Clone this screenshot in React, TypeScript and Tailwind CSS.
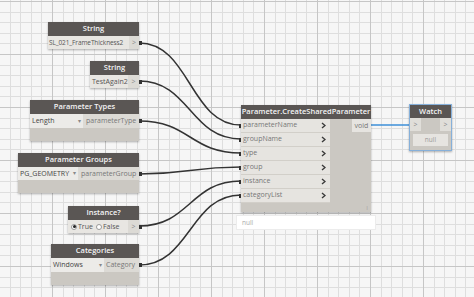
import type { ReactNode } from 'react'

// Dynamo-style graph: grid canvas, wires, nodes
function Node({ title, className, children }: { title: string; className: string; children: ReactNode }) {
  return (
    <div className={`absolute flex flex-col bg-[#cbc8c2] shadow-[0_1px_2px_rgba(0,0,0,0.3)] ${className}`}>
      <div className="flex h-[14px] shrink-0 items-center justify-center whitespace-nowrap bg-[#5a5654] text-[7.5px] font-semibold leading-none text-[#f4f4f4]">
        {title}
      </div>
      {children}
    </div>
  )
}

function OutPort({ className }: { className: string }) {
  return <div className={`absolute right-[-3px] h-[4px] w-[3px] bg-[#333] ${className}`} />
}

function Chevron() {
  return (
    <svg width="5" height="7" viewBox="0 0 5 7">
      <path d="M1 1 L4 3.5 L1 6" fill="none" stroke="#3a3a3a" strokeWidth="1.4" />
    </svg>
  )
}

const inputs = ['parameterName', 'groupName', 'type', 'group', 'instance', 'categoryList']

export default function App() {
  return (
    <div className="relative h-[297px] w-[474px] overflow-hidden bg-[#f6f6f6] font-['Open_Sans',sans-serif]">
      {/* grid */}
      <svg className="absolute inset-0" width="474" height="297">
        <defs>
          <pattern id="g" x="-1" y="1" width="53" height="53" patternUnits="userSpaceOnUse">
            <rect x="11" y="0" width="1" height="53" fill="#dedede" />
            <rect x="21" y="0" width="1" height="53" fill="#dedede" />
            <rect x="32" y="0" width="1" height="53" fill="#dedede" />
            <rect x="42" y="0" width="1" height="53" fill="#dedede" />
            <rect x="0" y="11" width="53" height="1" fill="#dedede" />
            <rect x="0" y="21" width="53" height="1" fill="#dedede" />
            <rect x="0" y="32" width="53" height="1" fill="#dedede" />
            <rect x="0" y="42" width="53" height="1" fill="#dedede" />
            <rect x="0" y="0" width="1" height="53" fill="#c6c6c6" />
            <rect x="0" y="0" width="53" height="1" fill="#c6c6c6" />
          </pattern>
        </defs>
        <rect width="474" height="297" fill="url(#g)" />
        <g fill="none" stroke="#333" strokeWidth="1.5">
          <path d="M139 43 C190 43 190 125 241 125" />
          <path d="M139 81 C190 81 190 139 241 139" />
          <path d="M139 121 C190 121 190 153 241 153" />
          <path d="M139 174 C190 174 190 167 241 167" />
          <path d="M139 226 C190 226 190 181 241 181" />
          <path d="M139 265 C190 265 190 195 241 195" />
        </g>
        <path d="M371 125 L409 125" stroke="#3d8fd9" strokeWidth="1.5" />
      </svg>

      {/* String 1 */}
      <Node title="String" className="left-[48px] top-[22px] w-[91px]">
        <div className="flex h-[13px] whitespace-nowrap text-[7px] leading-[13px] text-[#555]">
          <div className="flex-1 bg-[#e8e6e2] pl-[1px] text-[6.5px] tracking-[-0.1px]">SL_021_FrameThickness2</div>
          <div className="w-[10px] bg-[#dcdad5] text-center text-[#888]">&gt;</div>
        </div>
        <OutPort className="top-[19px]" />
      </Node>

      {/* String 2 */}
      <Node title="String" className="left-[90px] top-[61px] w-[49px]">
        <div className="flex h-[13px] whitespace-nowrap text-[7px] leading-[13px] text-[#555]">
          <div className="flex-1 bg-[#e8e6e2] pl-[2px]">TestAgain2</div>
          <div className="w-[11px] bg-[#dcdad5] text-center text-[#888]">&gt;</div>
        </div>
        <OutPort className="top-[19px]" />
      </Node>

      {/* Parameter Types */}
      <Node title="Parameter Types" className="left-[30px] top-[100px] w-[109px]">
        <div className="flex h-[14px] whitespace-nowrap text-[7px] leading-[14px]">
          <div className="flex w-[53px] justify-between bg-[#ecebe8] px-[2px] text-[#444]">
            <span>Length</span>
            <span className="text-[6px] text-[#888]">▾</span>
          </div>
          <div className="flex-1 bg-[#dcdad5] pl-[3px] text-[#777]">parameterType</div>
        </div>
        <div className="h-[13px]" />
        <OutPort className="top-[19px]" />
      </Node>

      {/* Parameter Groups */}
      <Node title="Parameter Groups" className="left-[18px] top-[153px] w-[121px]">
        <div className="flex h-[13px] whitespace-nowrap text-[7px] leading-[13px]">
          <div className="flex w-[60px] justify-between bg-[#ecebe8] px-[2px] text-[#444]">
            <span>PG_GEOMETRY</span>
            <span className="text-[6px] text-[#888]">▾</span>
          </div>
          <div className="flex-1 bg-[#dcdad5] pl-[3px] text-[#777]">parameterGroup</div>
        </div>
        <div className="h-[13px]" />
        <OutPort className="top-[19px]" />
      </Node>

      {/* Instance? */}
      <Node title="Instance?" className="left-[68px] top-[206px] w-[71px]">
        <div className="flex h-[13px] whitespace-nowrap text-[7px] leading-[13px] text-[#555]">
          <div className="flex flex-1 items-center gap-[3px] bg-[#e8e6e2] pl-[3px]">
            <span className="flex items-center gap-[1px]">
              <span className="flex h-[6px] w-[6px] items-center justify-center rounded-full border border-[#999] bg-white">
                <span className="h-[3px] w-[3px] rounded-full bg-[#222]" />
              </span>
              True
            </span>
            <span className="flex items-center gap-[1px]">
              <span className="h-[6px] w-[6px] rounded-full border border-[#999] bg-white" />
              False
            </span>
          </div>
          <div className="w-[11px] bg-[#dcdad5] text-center text-[#888]">&gt;</div>
        </div>
        <OutPort className="top-[19px]" />
      </Node>

      {/* Categories */}
      <Node title="Categories" className="left-[51px] top-[244px] w-[88px]">
        <div className="flex h-[14px] whitespace-nowrap text-[7px] leading-[14px]">
          <div className="flex w-[53px] justify-between bg-[#ecebe8] px-[2px] text-[#444]">
            <span>Windows</span>
            <span className="text-[6px] text-[#888]">▾</span>
          </div>
          <div className="flex-1 bg-[#dcdad5] pl-[2px] text-[#777]">Category</div>
        </div>
        <div className="h-[13px]" />
        <OutPort className="top-[19px]" />
      </Node>

      {/* Parameter.CreateSharedParameter */}
      <Node title="Parameter.CreateSharedParameter" className="left-[241px] top-[105px] w-[130px]">
        <div className="flex">
          <div className="flex w-[89px] flex-col">
            {inputs.map((name) => (
              <div
                key={name}
                className="relative flex h-[14px] items-center justify-between border-b border-[#d2cfc9] bg-[#e6e4e0] pl-[2px] pr-[4px] text-[7px] text-[#777]"
              >
                <div className="absolute left-[-2px] top-[5px] h-[4px] w-[2px] bg-[#333]" />
                <span>{name}</span>
                <Chevron />
              </div>
            ))}
          </div>
          <div className="flex flex-1 justify-end">
            <div className="h-[13px] w-[19px] bg-[#e6e4e0] text-center text-[7px] leading-[13px] text-[#777]">void</div>
          </div>
        </div>
        <div className="flex h-[9px] items-center justify-end pr-[3px] text-[6px] leading-none text-[#888]">⁞</div>
      </Node>
      <div className="absolute left-[236px] top-[215px] h-[15px] w-[140px] border border-[#ececec] bg-white pl-[5px] text-[6.5px] leading-[13px] text-[#aaa]">
        null
      </div>

      {/* Watch */}
      <div className="absolute left-[409px] top-[104px] flex w-[43px] flex-col border border-[#86b0da] bg-[#cbc8c2] shadow-[0_1px_2px_rgba(0,0,0,0.3)]">
        <div className="flex h-[13px] items-center justify-center bg-[#5a5654] text-[7.5px] font-semibold leading-none text-[#f4f4f4]">
          Watch
        </div>
        <div className="flex h-[13px] justify-between text-[7px] leading-[13px] text-[#888]">
          <div className="w-[11px] bg-[#e0ded9] text-center">&gt;</div>
          <div className="w-[11px] bg-[#e0ded9] text-center">&gt;</div>
        </div>
        <div className="px-[3px] pb-[4px] pt-[3px]">
          <div className="h-[12px] bg-[#e6e4e0] text-center text-[6.5px] leading-[12px] text-[#999]">null</div>
        </div>
      </div>
    </div>
  )
}
